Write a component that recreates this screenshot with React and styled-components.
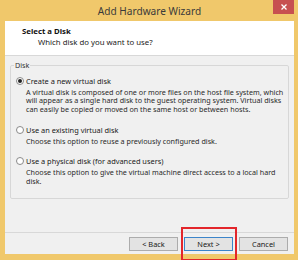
import styled, { createGlobalStyle } from "styled-components";

const Global = createGlobalStyle`
  body {
    margin: 0;
    background: #ffffff;
    font-family: "Noto Sans", "Open Sans", sans-serif;
  }
`;

const Window = styled.div`
  width: 298px;
  height: 260px;
  background: #f0c86b;
  display: flex;
  flex-direction: column;
  box-sizing: border-box;
  padding: 0 4px 6px 5px;
`;

const TitleBar = styled.div`
  height: 21px;
  display: grid;
  grid-template-columns: 1fr auto 1fr;
  align-items: center;
`;

const Title = styled.div`
  grid-column: 2;
  font-size: 10.1px;
  color: #3a3a3a;
  white-space: nowrap;
`;

const CloseButton = styled.div`
  grid-column: 3;
  justify-self: end;
  align-self: start;
  width: 21px;
  height: 14px;
  background: #c75050;
  display: flex;
  align-items: center;
  justify-content: center;
`;

const Client = styled.div`
  flex: 1;
  background: #f0f0f0;
  display: flex;
  flex-direction: column;
`;

const Header = styled.div`
  height: 35px;
  background: #ffffff;
  border-bottom: 1px solid #d8d8d8;
  box-sizing: border-box;
  padding: 6px 0 0 17px;
`;

const HeaderTitle = styled.div`
  font-size: 7.8px;
  font-weight: bold;
  color: #111;
  line-height: 9px;
`;

const HeaderSub = styled.div`
  font-size: 7.8px;
  color: #222;
  line-height: 9px;
  margin: 2px 0 0 16px;
`;

const Group = styled.fieldset`
  margin: 5px 6px 0 5px;
  padding: 6px 5px 12.5px 5px;
  border: 1px solid #d7d7d7;
  border-radius: 2px;
`;

const Legend = styled.legend`
  font-size: 7.2px;
  color: #333;
  padding: 0 1px;
  margin-left: -2px;
  line-height: 9px;
`;

const Option = styled.div`
  margin-bottom: ${(p) => p.$gap || 0}px;
`;

const RadioRow = styled.label`
  display: flex;
  align-items: center;
  gap: 2px;
  height: 9px;
  font-size: 7.4px;
  color: #1a1a1a;
  white-space: nowrap;
`;

const Radio = styled.span`
  width: 8px;
  height: 8px;
  border-radius: 50%;
  box-sizing: border-box;
  border: 1px solid #8a8a8a;
  background: #ffffff;
  display: flex;
  align-items: center;
  justify-content: center;
  &::after {
    content: "";
    width: 4px;
    height: 4px;
    border-radius: 50%;
    background: ${(p) => (p.$checked ? "#222" : "transparent")};
  }
`;

const Desc = styled.div`
  margin: 2.5px 0 0 10px;
  font-size: 7.2px;
  line-height: 8.5px;
  color: #2a2a2a;
  white-space: nowrap;
`;

const Spacer = styled.div`
  flex: 1;
`;

const Separator = styled.div`
  height: 1px;
  background: #d8d8d8;
`;

const ButtonRow = styled.div`
  display: flex;
  justify-content: flex-end;
  gap: 6px;
  padding: 4px 6px 3px 0;
`;

const ButtonWrap = styled.div`
  position: relative;
`;

const Button = styled.div`
  width: 49px;
  height: 14px;
  box-sizing: border-box;
  border: 1px solid ${(p) => (p.$focused ? "#3c84c9" : "#acacac")};
  background: #e3e3e3;
  font-size: 7.4px;
  color: #1a1a1a;
  display: flex;
  align-items: center;
  justify-content: center;
`;

const Highlight = styled.div`
  position: absolute;
  left: -3px;
  top: -10px;
  width: 56px;
  height: 34px;
  box-sizing: border-box;
  border: 2px solid #e3262b;
`;

export default function App() {
  return (
    <>
      <Global />
      <Window>
        <TitleBar>
          <Title>Add Hardware Wizard</Title>
          <CloseButton>
            <svg width="6" height="6" viewBox="0 0 6 6">
              <path d="M0.5 0.5 L5.5 5.5 M5.5 0.5 L0.5 5.5" stroke="#fff" strokeWidth="1.3" />
            </svg>
          </CloseButton>
        </TitleBar>
        <Client>
          <Header>
            <HeaderTitle>Select a Disk</HeaderTitle>
            <HeaderSub>Which disk do you want to use?</HeaderSub>
          </Header>
          <Group>
            <Legend>Disk</Legend>
            <Option $gap={12.5}>
              <RadioRow>
                <Radio $checked />
                Create a new virtual disk
              </RadioRow>
              <Desc>
                A virtual disk is composed of one or more files on the host file system, which
                <br />
                will appear as a single hard disk to the guest operating system. Virtual disks
                <br />
                can easily be copied or moved on the same host or between hosts.
              </Desc>
            </Option>
            <Option $gap={11}>
              <RadioRow>
                <Radio />
                Use an existing virtual disk
              </RadioRow>
              <Desc>Choose this option to reuse a previously configured disk.</Desc>
            </Option>
            <Option>
              <RadioRow>
                <Radio />
                Use a physical disk (for advanced users)
              </RadioRow>
              <Desc>
                Choose this option to give the virtual machine direct access to a local hard
                <br />
                disk.
              </Desc>
            </Option>
          </Group>
          <Spacer />
          <Separator />
          <ButtonRow>
            <Button>&lt; Back</Button>
            <ButtonWrap>
              <Button $focused>Next &gt;</Button>
              <Highlight />
            </ButtonWrap>
            <Button>Cancel</Button>
          </ButtonRow>
        </Client>
      </Window>
    </>
  );
}
